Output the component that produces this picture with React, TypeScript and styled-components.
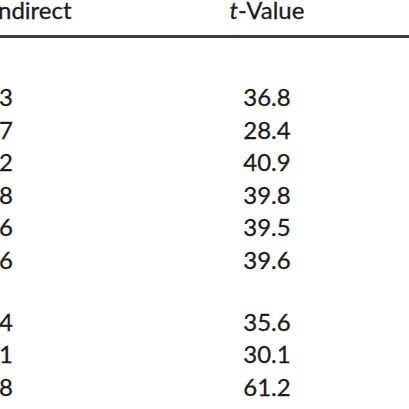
import React from 'react'
import styled, { createGlobalStyle } from 'styled-components'

const GlobalStyle = createGlobalStyle`
  html, body {
    margin: 0;
    padding: 0;
    background: #ffffff;
    overflow: hidden;
  }
  body {
    font-family: Lato, "Open Sans", "Liberation Sans", sans-serif;
    color: #1e1b1c;
    -webkit-text-stroke: 0.3px #1e1b1c;
  }
`

const Page = styled.div`
  width: 409px;
  height: 409px;
  overflow: hidden;
`

const HeaderRow = styled.div`
  display: grid;
  grid-template-columns: 229px 76px 1fr;
  font-size: 24px;
  line-height: 19px;
  padding-bottom: 16px;
  border-bottom: 3px solid #3a3a3a;
`

const Body = styled.div`
  padding-top: 43px;
`

const Row = styled.div<{ $gap?: boolean }>`
  display: grid;
  grid-template-columns: 229px 76px 1fr;
  font-size: 24px;
  line-height: 32.5px;
  margin-top: ${({ $gap }) => ($gap ? '29.5px' : '0')};
`

const LeftCell = styled.div<{ $indent?: number }>`
  white-space: nowrap;
  text-indent: ${({ $indent }) => $indent ?? 0}px;
`

const ValueCell = styled.div`
  text-align: center;
  white-space: nowrap;
`

const Italic = styled.span`
  font-style: italic;
`

const rows = [
  { left: '3', value: '36.8' },
  { left: '7', value: '28.4' },
  { left: '2', value: '40.9' },
  { left: '8', value: '39.8' },
  { left: '6', value: '39.5' },
  { left: '6', value: '39.6' },
  { left: '4', value: '35.6', gap: true },
  { left: '1', value: '30.1' },
  { left: '8', value: '61.2' },
]

const App = () => {
  return (
    <Page>
      <GlobalStyle />
      <HeaderRow>
        <LeftCell $indent={-2}>ndirect</LeftCell>
        <ValueCell>
          <Italic>t</Italic>-Value
        </ValueCell>
      </HeaderRow>
      <Body>
        {rows.map((r, i) => (
          <Row key={i} $gap={r.gap}>
            <LeftCell $indent={-1}>{r.left}</LeftCell>
            <ValueCell>{r.value}</ValueCell>
          </Row>
        ))}
      </Body>
    </Page>
  )
}

export default App
